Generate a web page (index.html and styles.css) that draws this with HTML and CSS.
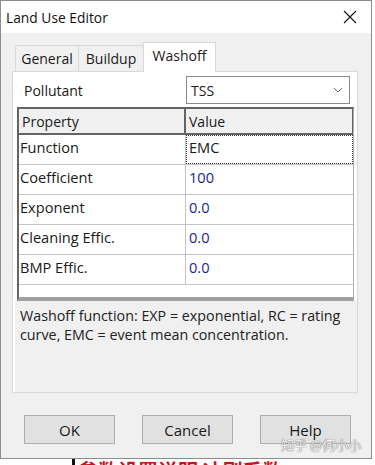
FILE: index.html
```html
<!DOCTYPE html>
<html lang="en">
<head>
    <meta charset="UTF-8">
    <meta name="viewport" content="width=device-width, initial-scale=1.0">
    <title>Land Use Editor</title>
    <link rel="stylesheet" href="styles.css">
</head>
<body>
    <div class="dialog">
        <div class="dialog-title">
            <span class="title-text">Land Use Editor</span>
            <svg class="close-icon" width="14" height="14" viewBox="0 0 14 14">
                <path d="M1 1 L13 13 M13 1 L1 13" stroke="#111" stroke-width="1.1" fill="none"/>
            </svg>
        </div>

        <div class="tabs">
            <div class="tab tab-general">General</div>
            <div class="tab tab-buildup">Buildup</div>
            <div class="tab tab-washoff active">Washoff</div>
        </div>

        <div class="tab-page">
            <div class="pollutant-row">
                <div class="pollutant-label">Pollutant</div>
                <div class="combo">
                    <span>TSS</span>
                    <svg width="10" height="6" viewBox="0 0 10 6">
                        <path d="M1 1 L5 5 L9 1" stroke="#666" stroke-width="1" fill="none"/>
                    </svg>
                </div>
            </div>

            <div class="grid">
                <div class="grid-row grid-head">
                    <div class="cell cell-name">Property</div>
                    <div class="cell cell-value">Value</div>
                </div>
                <div class="grid-row">
                    <div class="cell cell-name">Function</div>
                    <div class="cell cell-value focused">EMC</div>
                </div>
                <div class="grid-row">
                    <div class="cell cell-name">Coefficient</div>
                    <div class="cell cell-value num">100</div>
                </div>
                <div class="grid-row">
                    <div class="cell cell-name">Exponent</div>
                    <div class="cell cell-value num">0.0</div>
                </div>
                <div class="grid-row">
                    <div class="cell cell-name">Cleaning Effic.</div>
                    <div class="cell cell-value num">0.0</div>
                </div>
                <div class="grid-row">
                    <div class="cell cell-name">BMP Effic.</div>
                    <div class="cell cell-value num">0.0</div>
                </div>
                <div class="grid-filler"></div>
            </div>

            <div class="hint">
                Washoff function: EXP = exponential, RC = rating curve, EMC = event mean concentration.
            </div>
        </div>

        <div class="buttons">
            <button class="btn">OK</button>
            <button class="btn">Cancel</button>
            <button class="btn">Help</button>
        </div>

        <div class="watermark">知乎 @何小小</div>
    </div>
    <div class="under-strip">
        <div class="under-text">参数设置说明 冲刷系数</div>
    </div>
</body>
</html>
```

FILE: styles.css
```css
* {
    margin: 0;
    padding: 0;
    box-sizing: border-box;
}

body {
    font-family: "Open Sans", "Noto Sans", sans-serif;
    background: #ffffff;
    width: 375px;
    height: 465px;
    overflow: hidden;
    color: #1a1a1a;
}

.dialog {
    position: relative;
    width: 372px;
    height: 459px;
    background: #f0f0f0;
    border: 1px solid #8c8c8c;
}

.dialog-title {
    height: 32px;
    background: #ffffff;
    display: flex;
    align-items: center;
    justify-content: space-between;
    padding: 0 14px 0 5px;
}

.title-text {
    font-size: 13.8px;
    color: #111;
}

.tabs {
    display: flex;
    align-items: flex-end;
    margin: 9px 0 0 14px;
    height: 29px;
}

.tab {
    height: 26px;
    border: 1px solid #d9d9d9;
    border-bottom: none;
    background: #f0f0f0;
    font-size: 14px;
    line-height: 25px;
    text-align: center;
    color: #1a1a1a;
}

.tab-general {
    width: 64px;
}

.tab-buildup {
    width: 66px;
    margin-left: -1px;
}

.tab-washoff {
    width: 73px;
    margin-left: -1px;
}

.tab.active {
    height: 30px;
    background: #ffffff;
    line-height: 26px;
    margin-bottom: -1px;
    position: relative;
    z-index: 1;
}

.tab-page {
    margin-left: 11px;
    width: 346px;
    height: 322px;
    border: 1px solid #d9d9d9;
    background: #ffffff;
    display: flex;
    flex-direction: column;
}

.pollutant-row {
    display: flex;
    align-items: center;
    padding-top: 4px;
    height: 32px;
}

.pollutant-label {
    width: 173px;
    padding-left: 11px;
    font-size: 14px;
}

.combo {
    width: 164px;
    height: 28px;
    border: 1px solid #8a8a8a;
    display: flex;
    align-items: center;
    justify-content: space-between;
    padding: 0 6px 0 4px;
    font-size: 14px;
}

.grid {
    margin: 3px 0 0 4px;
    width: 337px;
    border-top: 2px solid #646464;
    border-left: 2px solid #646464;
    border-right: 1px solid #b0b0b0;
    border-bottom: 4px solid #a0a0a0;
    background: #ffffff;
}

.grid-row {
    display: flex;
    height: 30px;
    border-bottom: 1px solid #c4c4c4;
}

.grid-head {
    height: 26px;
    background: #f0f0f0;
    border-bottom: 2px solid #646464;
    border-right: 1px solid #646464;
}

.cell {
    font-size: 14.6px;
    display: flex;
    align-items: center;
    padding-bottom: 5px;
}

.grid-head .cell {
    font-size: 14px;
    padding-bottom: 0;
}

.cell-name {
    width: 167px;
    padding-left: 1px;
    border-right: 1px solid #c4c4c4;
}

.grid-head .cell-name {
    border-right: 2px solid #646464;
    padding-left: 3px;
}

.cell-value {
    flex: 1;
    padding-left: 3px;
}

.cell-value.num {
    color: #1c1f8c;
}

.cell-value.focused {
    border: 1px dotted #333;
    padding-left: 2px;
}

.grid-filler {
    height: 12px;
}

.hint {
    flex: 1;
    background: #f0f0f0;
    margin-left: 2px;
    padding: 5px 4px 0 5px;
    font-size: 14.3px;
    line-height: 19px;
    color: #222;
}

.buttons {
    display: flex;
    gap: 27px;
    margin: 22px 0 0 23px;
}

.btn {
    width: 91px;
    height: 29px;
    background: #e1e1e1;
    border: 1px solid #adadad;
    font-family: "Open Sans", "Noto Sans", sans-serif;
    font-size: 15px;
    color: #1a1a1a;
}

.watermark {
    position: absolute;
    left: 280px;
    top: 436px;
    font-family: "Noto Sans CJK SC", sans-serif;
    font-size: 13px;
    line-height: 16px;
    color: rgba(255, 255, 255, 0.92);
    text-shadow: 0 0 1px #6f6f6f, 0 0 1px #6f6f6f;
}

.under-strip {
    height: 6px;
    overflow: hidden;
    padding-left: 72px;
}

.under-text {
    border-left: 3px solid #111;
    padding-left: 3px;
    font-family: "Noto Sans CJK SC", sans-serif;
    font-weight: bold;
    font-size: 20px;
    line-height: 24px;
    color: #c8141e;
    white-space: nowrap;
}
```
